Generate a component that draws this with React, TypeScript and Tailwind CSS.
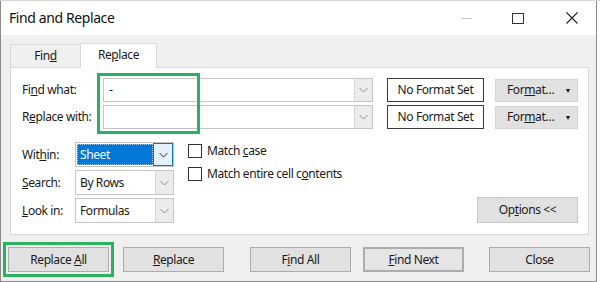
import React from "react";

const Chevron = ({ color = "#8a8a8a" }: { color?: string }) => (
  <svg width="9" height="6" viewBox="0 0 9 6" fill="none">
    <path d="M0.5 1 L4.5 5 L8.5 1" stroke={color} strokeWidth="1" />
  </svg>
);

const Combo = ({
  w,
  h,
  children,
}: {
  w: string;
  h: string;
  children?: React.ReactNode;
}) => (
  <div className={`flex ${w} ${h} border border-[#c6c6c6] bg-white`}>
    <div className="flex-1 flex items-center pl-[4px]">{children}</div>
    <div className="w-[18px] flex items-center justify-center bg-[#ececec] border-l border-[#d6d6d6]">
      <Chevron />
    </div>
  </div>
);

const Btn = ({
  children,
  cls = "",
}: {
  children: React.ReactNode;
  cls?: string;
}) => (
  <div
    className={`w-[101px] h-[25px] flex items-center justify-center bg-[#e1e1e1] border border-[#adadad] ${cls}`}
  >
    {children}
  </div>
);

const FormatBtn = () => (
  <div className="ml-[11px] w-[83px] h-[23px] bg-[#e1e1e1] border border-[#d4d4d4] flex items-center justify-end pr-[6px]">
    <span>
      For<span className="underline">m</span>at…
    </span>
    <span className="ml-[10px] text-[7px]">▼</span>
  </div>
);

export default function App() {
  return (
    <div className="w-[600px] h-[282px] bg-white font-['Noto_Sans',sans-serif] text-[12px] tracking-[-0.4px] text-[#1a1a1a] leading-none">
      <div className="h-px bg-[#d6d6d6]" />
      <div className="w-[597px] h-[281px] border-l border-r border-b border-[#8a8a8a] flex flex-col">
        {/* Title bar */}
        <div className="h-[34px] bg-white flex items-center relative">
          <span className="ml-[8px] text-[14px] tracking-[-0.4px] text-[#111]">Find and Replace</span>
          <div className="ml-auto flex items-center h-full">
            <div className="w-[11px] h-px bg-[#c8c8c8] mr-[40px]" />
            <div className="w-[12px] h-[11px] border border-[#333] mr-[42px]" />
            <svg width="12" height="12" viewBox="0 0 12 12" className="mr-[18px]">
              <path d="M0.5 0.5 L11.5 11.5 M11.5 0.5 L0.5 11.5" stroke="#222" strokeWidth="1.1" />
            </svg>
          </div>
        </div>
        {/* Body */}
        <div className="flex-1 bg-[#f0f0f0] flex flex-col pl-[9px]">
          {/* Tabs */}
          <div className="mt-[8px] h-[24px] flex items-end">
            <div className="w-[70px] h-[23px] border-l border-t border-[#d9d9d9] flex items-center justify-center">
              <span>
                Fin<span className="underline">d</span>
              </span>
            </div>
            <div className="relative z-10 -mb-px w-[77px] h-[25px] bg-white border-l border-t border-r border-[#d9d9d9] flex items-center justify-center pb-[2px]">
              <span>
                Re<span className="underline">p</span>lace
              </span>
            </div>
          </div>
          {/* Panel */}
          <div className="relative w-[579px] h-[168px] bg-white border border-[#d9d9d9] pl-[11px] pt-[10px] flex flex-col">
            {/* Row 1 */}
            <div className="flex items-center h-[24px]">
              <div className="w-[81px]">
                Fi<span className="underline">n</span>d what:
              </div>
              <div className="relative">
                <Combo w="w-[270px]" h="h-[24px]">
                  <span className="pl-[1px]">-</span>
                </Combo>
                <div className="absolute left-[-6px] top-[-5px] w-[103px] h-[61px] border-[3px] border-[#2bb162]" />
              </div>
              <div className="ml-[14px] w-[97px] h-[24px] border border-[#3a3a3a] flex items-center justify-center">
                No Format Set
              </div>
              <FormatBtn />
            </div>
            {/* Row 2 */}
            <div className="flex items-center h-[24px] mt-[3px]">
              <div className="w-[81px]">
                R<span className="underline">e</span>place with:
              </div>
              <Combo w="w-[270px]" h="h-[24px]" />
              <div className="ml-[14px] w-[97px] h-[24px] border border-[#3a3a3a] flex items-center justify-center">
                No Format Set
              </div>
              <FormatBtn />
            </div>
            {/* Lower */}
            <div className="flex mt-[13px] h-[81px]">
              <div className="flex flex-col gap-[3px]">
                <div className="flex items-center h-[25px]">
                  <div className="w-[53px]">
                    Wit<span className="underline">h</span>in:
                  </div>
                  <div className="flex w-[99px] h-[25px] border border-[#c6c6c6] bg-white">
                    <div className="flex-1 flex items-center pl-[1px]">
                      <div className="w-full h-[21px] bg-[#0078d7] text-white flex items-center pl-[3px] outline outline-1 outline-dotted outline-[#9fc9ef] -outline-offset-1">
                        Sheet
                      </div>
                    </div>
                    <div className="w-[20px] flex items-center justify-center bg-[#e5f1fb] border border-[#0078d7]">
                      <Chevron color="#333" />
                    </div>
                  </div>
                </div>
                <div className="flex items-center h-[25px]">
                  <div className="w-[53px]">
                    <span className="underline">S</span>earch:
                  </div>
                  <Combo w="w-[99px]" h="h-[25px]">
                    By Rows
                  </Combo>
                </div>
                <div className="flex items-center h-[25px]">
                  <div className="w-[53px]">
                    <span className="underline">L</span>ook in:
                  </div>
                  <Combo w="w-[99px]" h="h-[25px]">
                    Formulas
                  </Combo>
                </div>
              </div>
              <div className="ml-[14px] flex flex-col">
                <div className="flex items-center h-[17px]">
                  <div className="w-[14px] h-[14px] border border-[#333] bg-white" />
                  <span className="ml-[5px]">
                    Match <span className="underline">c</span>ase
                  </span>
                </div>
                <div className="flex items-center h-[17px] mt-[6px]">
                  <div className="w-[14px] h-[14px] border border-[#333] bg-white" />
                  <span className="ml-[5px]">
                    Match entire cell c<span className="underline">o</span>ntents
                  </span>
                </div>
              </div>
              <div className="ml-auto mr-[10px] self-end w-[101px] h-[26px] bg-[#e1e1e1] border border-[#c8c8c8] flex items-center justify-center">
                <span>
                  Op<span className="underline">t</span>ions &lt;&lt;
                </span>
              </div>
            </div>
          </div>
          {/* Buttons */}
          <div className="flex mt-[12px] ml-[-2px]">
            <div className="relative">
              <Btn>
                <span>
                  Replace <span className="underline">A</span>ll
                </span>
              </Btn>
              <div className="absolute -inset-[5px] border-[3px] border-[#2bb162]" />
            </div>
            <Btn cls="ml-[14px]">
              <span>
                <span className="underline">R</span>eplace
              </span>
            </Btn>
            <Btn cls="ml-[26px]">
              <span>
                F<span className="underline">i</span>nd All
              </span>
            </Btn>
            <Btn cls="ml-[12px] border-2 border-[#0078d7] bg-[#e5e5e5]">
              <span>
                <span className="underline">F</span>ind Next
              </span>
            </Btn>
            <Btn cls="ml-[25px]">
              <span>Close</span>
            </Btn>
          </div>
        </div>
      </div>
    </div>
  );
}
